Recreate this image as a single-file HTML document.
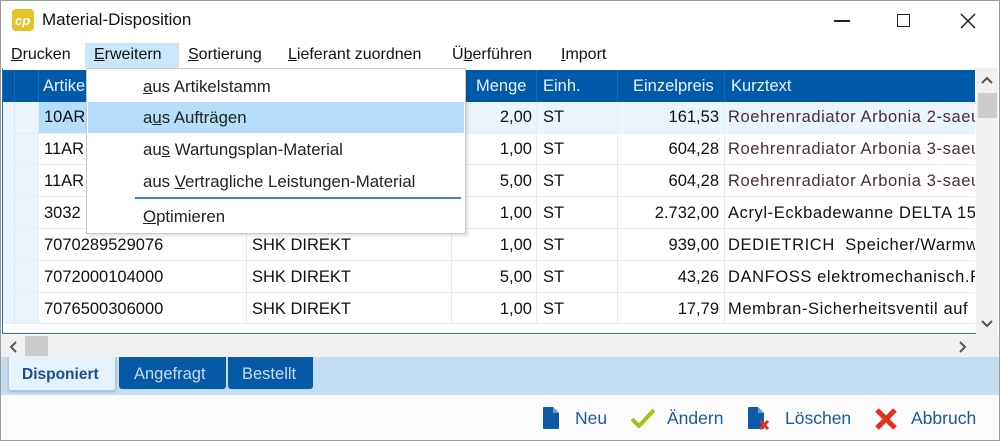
<!DOCTYPE html>
<html><head><meta charset="utf-8"><style>
*{margin:0;padding:0;box-sizing:border-box}
body{width:1000px;height:441px;overflow:hidden;background:#fff;font-family:"Liberation Sans",sans-serif;font-size:15px;color:#222;position:relative}
.a{position:absolute}
.win{left:0;top:0;width:1000px;height:441px;border:1px solid #9a9a9a}
.menu span{position:absolute;top:46px;font-size:16px;color:#111}
u{text-decoration:underline}
.hdr{left:3px;top:70px;width:972px;height:32px;background:#0059a9}
.hdr div{position:absolute;top:7px;color:#eaf2fb;font-size:16.5px}
.row{position:absolute;left:3px;width:972px;height:32px;border-bottom:1px solid #e4edf4}
.c{position:absolute;top:6px;font-size:16.5px;color:#111;white-space:nowrap}
.vl{position:absolute;top:102px;width:1px;height:222px;background:#e4edf4}
.dd{left:86px;top:68px;width:380px;height:166px;background:#fff;border:1px solid #c9c9c9;box-shadow:2px 2px 3px rgba(0,0,0,.12)}
.dd div{position:absolute;left:56px;font-size:16.8px;color:#222}
.kt .c{letter-spacing:.6px}
</style></head><body>
<div class="a win"></div>
<svg class="a" style="left:12px;top:9px" width="22" height="22"><rect x="0" y="0" width="22" height="22" rx="4" fill="#e3c22a"/><text x="3" y="16" font-size="13" fill="#fff" font-style="italic" font-weight="bold" font-family="Liberation Sans">cp</text></svg>
<div class="a" style="left:42px;top:10px;font-size:17px;color:#111">Material-Disposition</div>
<div class="a" style="left:834px;top:20px;width:16px;height:1.5px;background:#222"></div>
<div class="a" style="left:897px;top:14px;width:13px;height:13px;border:1.5px solid #222"></div>
<svg class="a" style="left:960px;top:13px" width="16" height="16"><path d="M1 1L15 15M15 1L1 15" stroke="#222" stroke-width="1.5"/></svg>
<div class="a" style="left:85px;top:43px;width:94px;height:25px;background:#cce6f9"></div>
<div class="menu">
<span style="left:11px"><u>D</u>rucken</span>
<span style="left:94px"><u>E</u>rweitern</span>
<span style="left:188px"><u>S</u>ortierung</span>
<span style="left:288px"><u>L</u>ieferant zuordnen</span>
<span style="left:452px">Ü<u>b</u>erführen</span>
<span style="left:561px"><u>I</u>mport</span>
</div>
<div class="a" style="left:2px;top:68px;width:975px;height:266px;border:1px solid #2a72b8;border-top:none"></div>
<div class="a hdr">
<div style="left:40px">Artikel</div>
<div style="left:473px">Menge</div>
<div style="left:540px">Einh.</div>
<div style="left:630px">Einzelpreis</div>
<div style="left:728px">Kurztext</div>
</div>
<div class="a" style="left:14px;top:70px;width:1px;height:32px;background:#1a6ab4"></div>
<div class="a" style="left:38px;top:70px;width:1px;height:32px;background:#1a6ab4"></div>
<div class="a" style="left:536px;top:70px;width:1px;height:32px;background:#1a6ab4"></div>
<div class="a" style="left:617px;top:70px;width:1px;height:32px;background:#1a6ab4"></div>
<div class="a" style="left:724px;top:70px;width:1px;height:32px;background:#1a6ab4"></div>
<div class="a" style="left:3px;top:102px;width:35px;height:222px;background:#e8f3fc"></div>
<div class="row" style="top:102px;background:#eaf4fc"></div>
<div class="a" style="left:38px;top:102px;width:208px;height:31px;background:#b5defa"></div>
<div class="row" style="top:133px"></div>
<div class="row" style="top:165px"></div>
<div class="row" style="top:197px"></div>
<div class="row" style="top:229px"></div>
<div class="row" style="top:261px"></div>
<div class="row" style="top:293px;height:31px"></div>
<div class="vl" style="left:14px;background:#d6e6f2"></div>
<div class="vl" style="left:38px"></div>
<div class="vl" style="left:246px"></div>
<div class="vl" style="left:451px"></div>
<div class="vl" style="left:536px"></div>
<div class="vl" style="left:617px"></div>
<div class="vl" style="left:724px"></div>
<div class="c" style="left:44px;top:108px">10AR</div>
<div class="c" style="left:44px;top:140px">11AR</div>
<div class="c" style="left:44px;top:172px">11AR</div>
<div class="c" style="left:44px;top:204px">3032</div>
<div class="c" style="left:44px;top:236px">7070289529076</div>
<div class="c" style="left:44px;top:268px">7072000104000</div>
<div class="c" style="left:44px;top:300px">7076500306000</div>
<div class="c" style="left:252px;top:236px">SHK DIREKT</div>
<div class="c" style="left:252px;top:268px">SHK DIREKT</div>
<div class="c" style="left:252px;top:300px">SHK DIREKT</div>
<div class="c" style="right:468px;top:108px">2,00</div>
<div class="c" style="right:468px;top:140px">1,00</div>
<div class="c" style="right:468px;top:172px">5,00</div>
<div class="c" style="right:468px;top:204px">1,00</div>
<div class="c" style="right:468px;top:236px">1,00</div>
<div class="c" style="right:468px;top:268px">5,00</div>
<div class="c" style="right:468px;top:300px">1,00</div>
<div class="c" style="left:543px;top:108px">ST</div>
<div class="c" style="left:543px;top:140px">ST</div>
<div class="c" style="left:543px;top:172px">ST</div>
<div class="c" style="left:543px;top:204px">ST</div>
<div class="c" style="left:543px;top:236px">ST</div>
<div class="c" style="left:543px;top:268px">ST</div>
<div class="c" style="left:543px;top:300px">ST</div>
<div class="c" style="right:281px;top:108px">161,53</div>
<div class="c" style="right:281px;top:140px">604,28</div>
<div class="c" style="right:281px;top:172px">604,28</div>
<div class="c" style="right:281px;top:204px">2.732,00</div>
<div class="c" style="right:281px;top:236px">939,00</div>
<div class="c" style="right:281px;top:268px">43,26</div>
<div class="c" style="right:281px;top:300px">17,79</div>
<div class="a kt" style="left:728px;top:102px;width:247px;height:222px;overflow:hidden">
<div class="c" style="left:0;top:6px;color:#4a3030">Roehrenradiator Arbonia 2-saeulig</div>
<div class="c" style="left:0;top:38px;color:#4a3030">Roehrenradiator Arbonia 3-saeulig</div>
<div class="c" style="left:0;top:70px;color:#4a3030">Roehrenradiator Arbonia 3-saeulig</div>
<div class="c" style="left:0;top:102px">Acryl-Eckbadewanne DELTA 150</div>
<div class="c" style="left:0;top:134px">DEDIETRICH&nbsp; Speicher/Warmwasser</div>
<div class="c" style="left:0;top:166px">DANFOSS elektromechanisch.Regler</div>
<div class="c" style="left:0;top:198px">Membran-Sicherheitsventil auf</div>
</div>
<div class="a" style="left:976px;top:68px;width:22px;height:267px;background:#f0f0f0"></div>
<div class="a" style="left:978px;top:93px;width:19px;height:25px;background:#cdcdcd"></div>
<svg class="a" style="left:981px;top:76px" width="12" height="8"><path d="M1 7L6 2L11 7" stroke="#555" stroke-width="2" fill="none"/></svg>
<svg class="a" style="left:981px;top:320px" width="12" height="8"><path d="M1 1L6 6L11 1" stroke="#555" stroke-width="2" fill="none"/></svg>
<div class="a" style="left:1px;top:335px;width:998px;height:22px;background:#f0f0f0"></div>
<div class="a" style="left:25px;top:336px;width:23px;height:20px;background:#cdcdcd"></div>
<svg class="a" style="left:9px;top:341px" width="8" height="12"><path d="M7 1L2 6L7 11" stroke="#555" stroke-width="2" fill="none"/></svg>
<svg class="a" style="left:959px;top:341px" width="8" height="12"><path d="M1 1L6 6L1 11" stroke="#555" stroke-width="2" fill="none"/></svg>
<div class="a" style="left:1px;top:357px;width:998px;height:38px;background:#c5ddf1"></div>
<div class="a" style="left:8px;top:357px;width:108px;height:34px;background:#e5f1fb;border:1px solid #b8c8d8;border-top:none;border-radius:0 0 3px 3px;box-shadow:0 1px 2px rgba(0,0,0,.2)"></div>
<div class="a" style="left:22px;top:366px;color:#1b4f8a;font-weight:bold;font-size:15.5px">Disponiert</div>
<div class="a" style="left:119px;top:357px;width:107px;height:32px;background:#0559a6;border-radius:0 0 3px 3px"></div>
<div class="a" style="left:134px;top:365px;color:#c7dcf0;font-size:16.5px">Angefragt</div>
<div class="a" style="left:228px;top:357px;width:85px;height:32px;background:#0559a6;border-radius:0 0 3px 3px"></div>
<div class="a" style="left:242px;top:365px;color:#c7dcf0;font-size:16.5px">Bestellt</div>
<div class="a" style="left:1px;top:395px;width:998px;height:45px;background:#fbfbfb"></div>
<svg class="a" style="left:543px;top:407px" width="16" height="22"><path d="M0 1Q0 0 1 0H10L16 6V21Q16 22 15 22H1Q0 22 0 21Z" fill="#0d5aa8"/><path d="M10 0V6H16" fill="#6a9ad0"/></svg>
<div class="a" style="left:575px;top:408px;color:#1d5a9a;font-size:17.5px">Neu</div>
<svg class="a" style="left:631px;top:408px" width="24" height="20"><path d="M1 11L8 18L23 2" stroke="#9fc21a" stroke-width="4" fill="none"/></svg>
<div class="a" style="left:667px;top:408px;color:#1d5a9a;font-size:17.5px">Ändern</div>
<svg class="a" style="left:748px;top:407px" width="24" height="24"><path d="M0 1Q0 0 1 0H10L16 6V21Q16 22 15 22H1Q0 22 0 21Z" fill="#0d5aa8"/><path d="M10 0V6H16" fill="#6a9ad0"/><path d="M12 14L20 22M20 14L12 22" stroke="#e2301c" stroke-width="3"/></svg>
<div class="a" style="left:785px;top:408px;color:#1d5a9a;font-size:17.5px">Löschen</div>
<svg class="a" style="left:875px;top:408px" width="22" height="22"><path d="M2 2L20 20M20 2L2 20" stroke="#e2301c" stroke-width="5"/></svg>
<div class="a" style="left:911px;top:408px;color:#1d5a9a;font-size:17.5px">Abbruch</div>
<div class="a dd">
<div style="top:8px"><u>a</u>us Artikelstamm</div>
<div style="left:1px;top:33px;width:376px;height:31px;background:#b5defa"></div>
<div style="top:39px">a<u>u</u>s Aufträgen</div>
<div style="top:71px">au<u>s</u> Wartungsplan-Material</div>
<div style="top:103px">aus <u>V</u>ertragliche Leistungen-Material</div>
<div style="left:48px;top:128px;width:326px;height:1.5px;background:#4682c0"></div>
<div style="top:138px"><u>O</u>ptimieren</div>
</div>
</body></html>
